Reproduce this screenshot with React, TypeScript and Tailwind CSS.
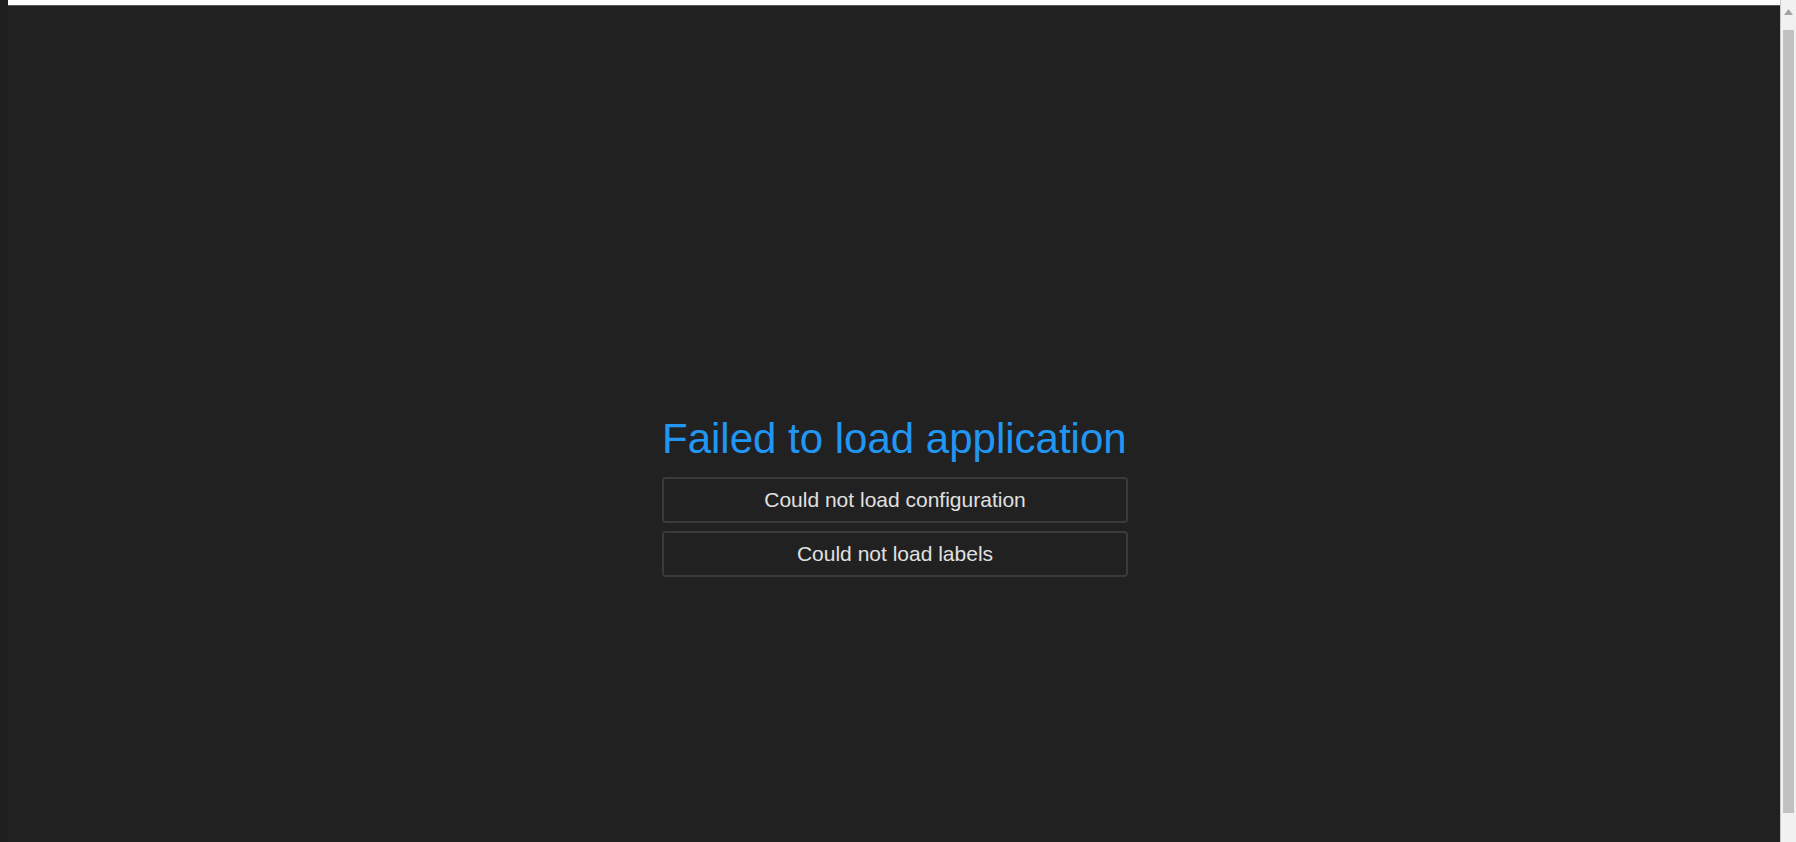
export default function App() {
  const errors = ["Could not load configuration", "Could not load labels"];

  return (
    <div className="flex h-screen w-full overflow-hidden bg-[#212121] font-['Liberation_Sans',Arial,sans-serif]">
      {/* left frame strip */}
      <div className="w-[8px] shrink-0 bg-[#1f1f1f]" />

      <div className="flex min-w-0 flex-1 flex-col">
        {/* top bar */}
        <div className="h-[5px] shrink-0 bg-white" />
        <div className="h-[1px] shrink-0 bg-[#5a5a5a]" />

        {/* Error panel */}
        <div className="flex flex-1 flex-col items-center pt-[409px] pl-[2px]">
          <div className="flex w-[466px] flex-col">
            <h1 className="text-[42px] leading-[47px] font-normal text-[#2196f3]">
              Failed to load application
            </h1>
            <div className="mt-[15px] flex flex-col gap-[8px]">
              {errors.map((err) => (
                <div
                  key={err}
                  className="flex h-[46px] items-center justify-center rounded-[4px] border-2 border-[#3a3a3a] text-[21px] text-[#e0e0e0]"
                >
                  {err}
                </div>
              ))}
            </div>
          </div>
        </div>
      </div>

      {/* scrollbar */}
      <div className="flex w-[16px] shrink-0 flex-col border-l border-[#c8c8c8] bg-[#f1f1f1]">
        <div className="flex h-[24px] items-center justify-center">
          <svg width="9" height="6" viewBox="0 0 9 6">
            <path d="M0 6 L4.5 0 L9 6 Z" fill="#a3a3a3" />
          </svg>
        </div>
        <div className="mx-[2px] mt-[6px] h-[783px] bg-[#c1c1c1]" />
      </div>
    </div>
  );
}
